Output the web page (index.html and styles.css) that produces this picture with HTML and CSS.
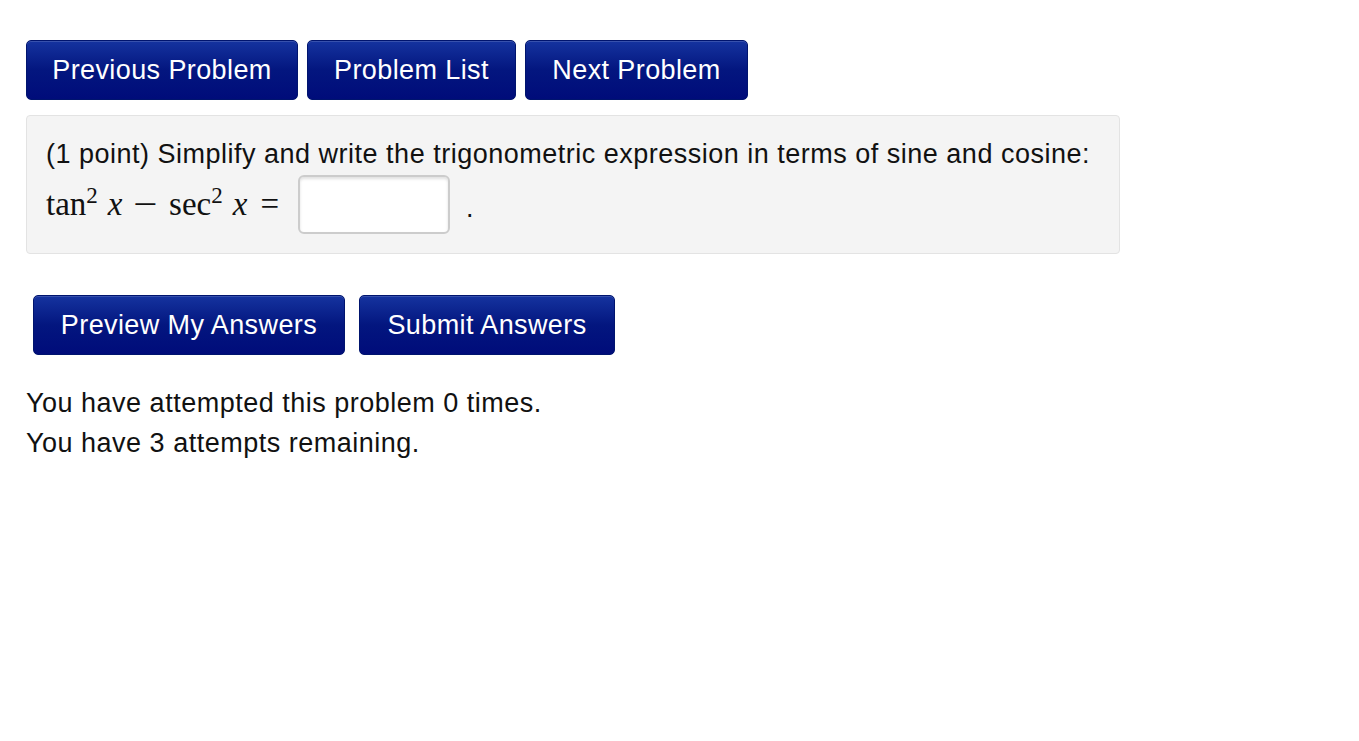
FILE: index.html
```html
<!DOCTYPE html>
<html lang="en">
<head>
    <meta charset="UTF-8">
    <title>Problem</title>
    <link rel="stylesheet" href="styles.css">
</head>
<body>
    <div class="nav">
        <button class="btn btn-prev">Previous Problem</button>
        <button class="btn btn-list">Problem List</button>
        <button class="btn btn-next">Next Problem</button>
    </div>

    <div class="problem">
        <p class="statement">(1 point) Simplify and write the trigonometric expression in terms of sine and cosine:</p>
        <div class="answer-row">
            <span class="math">tan<sup>2</sup><i>x</i><span class="op minus">&minus;</span>sec<sup>2</sup><i>x</i><span class="op">=</span></span>
            <input type="text" class="answer">
            <span class="dot">.</span>
        </div>
    </div>

    <div class="submit">
        <button class="btn btn-preview">Preview My Answers</button>
        <button class="btn btn-submit">Submit Answers</button>
    </div>

    <div class="attempts">
        <p>You have attempted this problem 0 times.</p>
        <p>You have 3 attempts remaining.</p>
    </div>
</body>
</html>
```

FILE: styles.css
```css
body {
    margin: 0;
    padding: 40px 26px;
    font-family: "Liberation Sans", Arial, sans-serif;
    font-size: 27px;
    letter-spacing: 0.5px;
    color: #111;
    background: #fff;
}
.nav {
    display: flex;
    gap: 9px;
}
.btn {
    font-family: "Liberation Sans", Arial, sans-serif;
    font-size: 27px;
    letter-spacing: 0.4px;
    color: #fff;
    height: 60px;
    padding: 0;
    background: linear-gradient(#15339f, #03167f 50%, #000c7a);
    border: 1px solid #00146e;
    border-radius: 5px;
    box-shadow: inset 0 1px 0 rgba(255, 255, 255, 0.15);
    cursor: pointer;
}
.btn-prev { width: 272px; }
.btn-list { width: 209px; }
.btn-next { width: 223px; }
.problem {
    width: 1054px;
    margin-top: 15px;
    padding: 22px 19px 19px;
    background: #f4f4f4;
    border: 1px solid #e3e3e3;
    border-radius: 4px;
}
.statement {
    margin: 0;
    line-height: 32px;
}
.answer-row {
    display: flex;
    align-items: center;
    margin-top: 5px;
}
.math {
    font-family: "Liberation Serif", "Times New Roman", serif;
    font-size: 33px;
    letter-spacing: 0;
}
.math sup {
    font-size: 23px;
    line-height: 0;
    margin-right: 10px;
}
.math .op {
    margin: 0 12px 0 13px;
}
.math .minus {
    display: inline-block;
    transform: scaleX(1.3);
    margin: 0 14px;
}
.answer {
    width: 152px;
    height: 59px;
    box-sizing: border-box;
    margin-left: 7px;
    border: 2px solid #ccc;
    border-radius: 6px;
    background: #fff;
    box-shadow: inset 0 2px 3px rgba(0, 0, 0, 0.12);
}
.dot {
    margin-left: 16px;
    margin-top: 8px;
}
.submit {
    display: flex;
    gap: 14px;
    margin-top: 41px;
    padding-left: 7px;
}
.btn-preview { width: 312px; }
.btn-submit { width: 256px; }
.attempts {
    margin-top: 28px;
}
.attempts p {
    margin: 0;
    line-height: 40px;
}
```
